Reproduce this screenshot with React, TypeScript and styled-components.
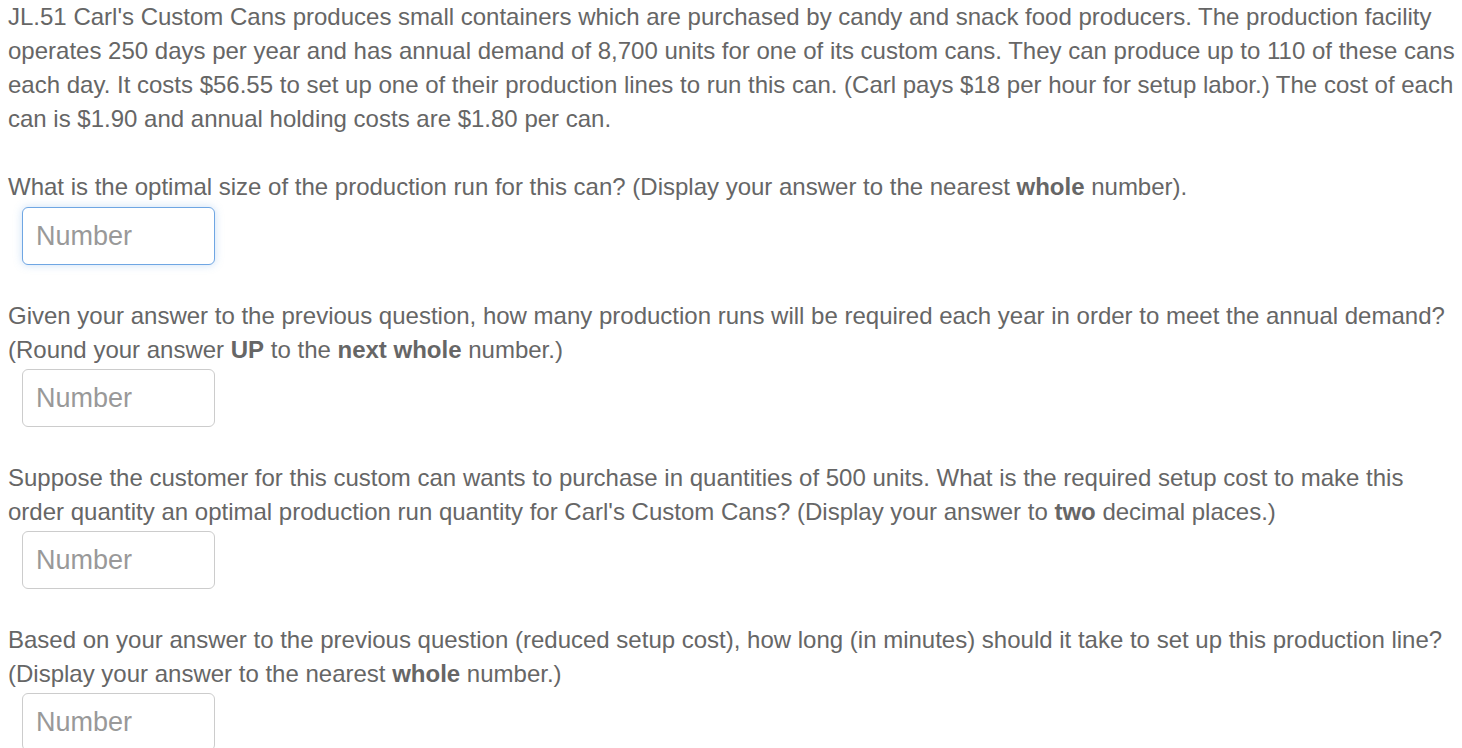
import React from "react";
import styled, { createGlobalStyle } from "styled-components";

const Global = createGlobalStyle`
  html, body { background: #ffffff; }
  body {
    margin: 0;
    padding: 0 0 0 8px;
    font-family: "Liberation Sans", Arial, Helvetica, sans-serif;
    font-size: 24px;
    line-height: 34px;
    color: #666666;
  }
`;

const Page = styled.div`
  display: flex;
  flex-direction: column;
`;

const Intro = styled.p`
  margin: 0 0 34px 0;
`;

const Question = styled.div`
  display: flex;
  flex-direction: column;
  align-items: flex-start;
  margin-bottom: 34px;
`;

const Prompt = styled.p`
  margin: 0;
`;

const Strong = styled.b`
  font-weight: bold;
  color: #666666;
`;

const Field = styled.input<{ $focused?: boolean }>`
  box-sizing: border-box;
  width: 193px;
  height: 58px;
  margin: ${(p) => (p.$focused ? "3px" : "2px")} 0 0 14px;
  padding: 0 13px;
  font-family: "Liberation Sans", Arial, Helvetica, sans-serif;
  font-size: 27px;
  color: #555;
  background: #fff;
  border: 1.5px solid ${(p) => (p.$focused ? "#6fa6e3" : "#cccccc")};
  border-radius: 6px;
  outline: none;
  box-shadow: ${(p) => (p.$focused ? "0 0 8px rgba(102, 163, 230, 0.35)" : "none")};
  &::placeholder {
    color: #999999;
  }
`;

export default function App() {
  return (
    <Page>
      <Global />
      <Intro>
        JL.51 Carl's Custom Cans produces small containers which are purchased by candy and snack food producers. The
        production facility operates 250 days per year and has annual demand of 8,700 units for one of its custom cans.
        They can produce up to 110 of these cans each day. It costs $56.55 to set up one of their production lines to run
        this can. (Carl pays $18 per hour for setup labor.) The cost of each can is $1.90 and annual holding costs are
        $1.80 per can.
      </Intro>
      <Question>
        <Prompt>
          What is the optimal size of the production run for this can? (Display your answer to the nearest{" "}
          <Strong>whole</Strong> number).
        </Prompt>
        <Field $focused placeholder="Number" />
      </Question>
      <Question>
        <Prompt>
          Given your answer to the previous question, how many production runs will be required each year in order to
          meet the annual demand? (Round your answer <Strong>UP</Strong> to the <Strong>next whole</Strong> number.)
        </Prompt>
        <Field placeholder="Number" />
      </Question>
      <Question>
        <Prompt>
          Suppose the customer for this custom can wants to purchase in quantities of 500 units. What is the required
          setup cost to make this order quantity an optimal production run quantity for Carl's Custom Cans? (Display your
          answer to <Strong>two</Strong> decimal places.)
        </Prompt>
        <Field placeholder="Number" />
      </Question>
      <Question>
        <Prompt>
          Based on your answer to the previous question (reduced setup cost), how long (in minutes) should it take to set
          up this production line? (Display your answer to the nearest <Strong>whole</Strong> number.)
        </Prompt>
        <Field placeholder="Number" />
      </Question>
    </Page>
  );
}
